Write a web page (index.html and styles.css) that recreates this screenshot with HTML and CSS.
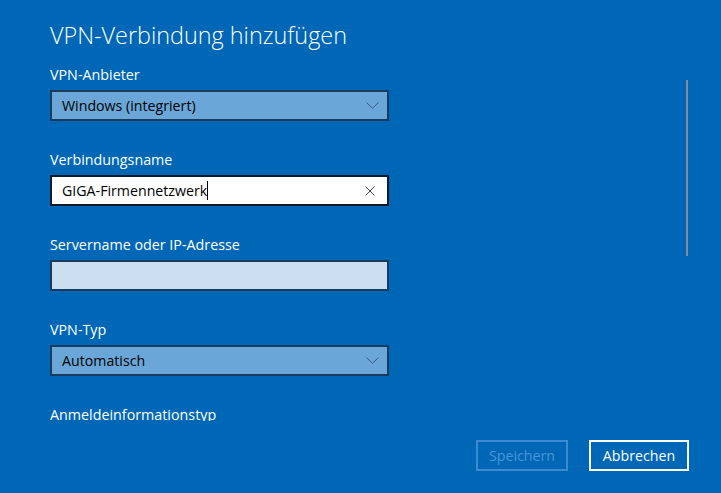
FILE: index.html
```html
<!DOCTYPE html>
<html lang="de">
<head>
<meta charset="utf-8">
<title>VPN-Verbindung hinzufügen</title>
<link rel="stylesheet" href="styles.css">
</head>
<body>
<div class="dialog">
  <h1 class="title">VPN-Verbindung hinzufügen</h1>
  <div class="scroll">
    <div class="field">
      <div class="label">VPN-Anbieter</div>
      <div class="control select">
        <span class="value">Windows (integriert)</span>
        <svg class="chev" width="13" height="7" viewBox="0 0 13 7"><path d="M0.5 0.5 L6.5 6.3 L12.5 0.5" fill="none" stroke="#3a5d80" stroke-width="1"/></svg>
      </div>
    </div>
    <div class="field">
      <div class="label">Verbindungsname</div>
      <div class="control text">
        <span class="value">GIGA-Firmennetzwerk<span class="caret"></span></span>
        <svg class="clear" width="10" height="10" viewBox="0 0 10 10"><path d="M0.5 0.5 L9.5 9.5 M9.5 0.5 L0.5 9.5" fill="none" stroke="#444" stroke-width="1"/></svg>
      </div>
    </div>
    <div class="field">
      <div class="label">Servername oder IP-Adresse</div>
      <div class="control empty"></div>
    </div>
    <div class="field">
      <div class="label">VPN-Typ</div>
      <div class="control select">
        <span class="value">Automatisch</span>
        <svg class="chev" width="13" height="7" viewBox="0 0 13 7"><path d="M0.5 0.5 L6.5 6.3 L12.5 0.5" fill="none" stroke="#3a5d80" stroke-width="1"/></svg>
      </div>
    </div>
    <div class="field">
      <div class="label">Anmeldeinformationstyp</div>
    </div>
  </div>
  <div class="scrollbar"></div>
  <div class="footer">
    <button class="btn disabled">Speichern</button>
    <button class="btn primary">Abbrechen</button>
  </div>
</div>
</body>
</html>
```
FILE: styles.css
```css
html, body {
  margin: 0;
  padding: 0;
  background: #0067b6;
  overflow: hidden;
}
body {
  font-family: "Open Sans", "Noto Sans", "Liberation Sans", sans-serif;
  color: #ffffff;
}
.dialog {
  position: relative;
  width: 721px;
  height: 493px;
  padding-left: 50px;
  box-sizing: border-box;
}
.title {
  margin: 0;
  padding-top: 19px;
  height: 56px;
  box-sizing: border-box;
  font-size: 23.4px;
  font-weight: 300;
  line-height: 32px;
  white-space: nowrap;
}
.scroll {
  height: 365px;
  overflow: hidden;
  padding-top: 8px;
  box-sizing: border-box;
  width: 339px;
}
.field {
  margin-bottom: 28px;
}
.label {
  font-size: 14.3px;
  line-height: 22px;
  height: 22px;
  margin-bottom: 4px;
  white-space: nowrap;
}
.control {
  height: 31px;
  box-sizing: border-box;
  border: 2px solid #1b3b5e;
  display: flex;
  align-items: center;
  padding: 0 8px 0 10px;
  color: #000;
  font-size: 14.2px;
}
.control .value {
  flex: 1;
  display: flex;
  align-items: center;
  white-space: nowrap;
}
.select {
  background: #6aa7d8;
}
.text {
  background: #ffffff;
  border-color: #0d1a2a;
}
.empty {
  background: #cbdff0;
}
.caret {
  display: inline-block;
  width: 1px;
  height: 19px;
  background: #000;
}
.clear {
  margin-right: 4px;
}
.scrollbar {
  position: absolute;
  left: 686px;
  top: 80px;
  width: 2px;
  height: 176px;
  background: #7d8f9f;
}
.footer {
  display: flex;
  justify-content: flex-end;
  gap: 21px;
  padding-right: 32px;
  margin-top: 19px;
}
.btn {
  height: 31px;
  box-sizing: border-box;
  background: transparent;
  font-family: inherit;
  font-size: 14.2px;
  padding: 0;
  cursor: default;
}
.disabled {
  width: 92px;
  border: 2px solid #3e8ad0;
  color: #4d95d6;
}
.primary {
  width: 100px;
  border: 2px solid #ffffff;
  color: #ffffff;
}
```
